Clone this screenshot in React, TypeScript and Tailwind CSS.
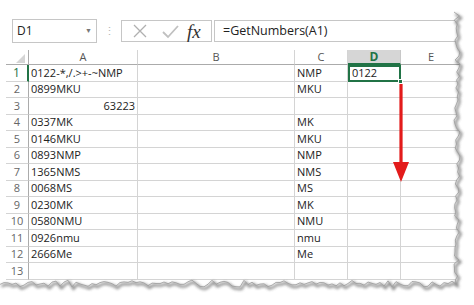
import React from "react";

const rows: [string, string, boolean?][] = [
  ["0122-*,/.>+-~NMP", "NMP"],
  ["0899MKU", "MKU"],
  ["63223", "", true],
  ["0337MK", "MK"],
  ["0146MKU", "MKU"],
  ["0893NMP", "NMP"],
  ["1365NMS", "NMS"],
  ["0068MS", "MS"],
  ["0230MK", "MK"],
  ["0580NMU", "NMU"],
  ["0926nmu", "nmu"],
  ["2666Me", "Me"],
  ["", ""],
];

// pseudo random for torn paper edge
const rnd = (i: number) => {
  const v = Math.sin(i * 12.9898) * 43758.5453;
  return v - Math.floor(v);
};

function TornEdge() {
  const edge: string[] = [];
  for (let y = 12, i = 0; y <= 282; y += 4, i++) {
    edge.push(`${(454 + rnd(i) * 6).toFixed(1)},${y}`);
  }
  for (let x = 456, i = 0; x >= 0; x -= 4, i++) {
    edge.push(`${x},${(280 + rnd(i + 200) * 7).toFixed(1)}`);
  }
  const paper = `M0,12 L455,12 L${edge.join(" L")} L0,283 Z`;
  return (
    <svg className="absolute inset-0 pointer-events-none" width={474} height={305}>
      <defs>
        <filter id="blur" x="-10%" y="-10%" width="120%" height="120%">
          <feGaussianBlur stdDeviation="1.4" />
        </filter>
      </defs>
      <path d={`M0,0 H474 V305 H0 Z ${paper}`} fill="#fff" fillRule="evenodd" />
      <polyline
        points={edge.join(" ")}
        fill="none"
        stroke="#444"
        strokeWidth={2}
        opacity={0.75}
        filter="url(#blur)"
        transform="translate(1.5,2)"
      />
      <polyline points={edge.join(" ")} fill="none" stroke="#9a9a9a" strokeWidth={0.8} />
    </svg>
  );
}

export default function App() {
  return (
    <div
      className="relative w-[474px] h-[305px] overflow-hidden bg-white text-[#222]"
      style={{ fontFamily: "'Open Sans', sans-serif" }}
    >
      <div className="h-[12px] border-b border-[#e6e6e6] flex items-start">
        <span className="ml-[58px] mt-[3px] w-[1px] h-[4px] bg-[#bbb]" />
        <span className="ml-[5px] mt-[3px] w-[1px] h-[4px] bg-[#bbb]" />
        <span className="ml-[180px] mt-[3px] w-[1px] h-[4px] bg-[#bbb]" />
      </div>

      {/* formula bar */}
      <div className="flex items-center h-[24px] mt-[7px] pl-[12px]">
        <div className="w-[85px] h-[24px] border border-[#c6c6c6] flex items-center justify-between px-[4px] text-[12px]">
          <span>D1</span>
          <span className="text-[7px] text-[#777]">▼</span>
        </div>
        <div className="w-[24px] flex justify-center text-[#b5b5b5] text-[11px]">⋮</div>
        <div className="w-[91px] h-[22px] border border-[#c6c6c6] flex items-center">
          <svg width={30} height={20} viewBox="0 0 30 20" className="ml-[3px]">
            <path d="M9 4 L21 16 M21 4 L9 16" stroke="#b0b0b0" strokeWidth={1.3} fill="none" />
          </svg>
          <svg width={30} height={20} viewBox="0 0 30 20">
            <path d="M8 11 L13 16 L23 5" stroke="#c0c0c0" strokeWidth={1.8} fill="none" />
          </svg>
          <span
            className="ml-[2px] italic text-[19px] leading-none text-[#333]"
            style={{ fontFamily: "'Liberation Serif', serif" }}
          >
            fx
          </span>
        </div>
        <div className="ml-[2px] flex-1 h-[22px] border border-[#c6c6c6] flex items-center pl-[8px] text-[12.5px]">
          =GetNumbers(A1)
        </div>
      </div>

      {/* sheet */}
      <div className="mt-[7px] ml-[6px] w-[456px] grid grid-cols-[23px_109px_157px_53px_53px_1fr] text-[11px]">
        <div className="h-[15px] border-b border-r border-[#ababab] flex items-end justify-end pr-[3px] pb-[1px]">
          <svg width={9} height={9} viewBox="0 0 9 9">
            <path d="M9 0 L9 9 L0 9 Z" fill="#d5d5d5" />
          </svg>
        </div>
        {["A", "B", "C", "D", "E"].map((c) => (
          <div
            key={c}
            className={
              c === "D"
                ? "h-[15px] bg-[#d6d6d6] border-b-2 border-b-[#217346] border-r border-r-[#c8c8c8] flex items-center justify-center text-[12px] font-bold text-[#217346]"
                : "h-[15px] border-b border-[#ababab] border-r border-r-[#d4d4d4] flex items-center justify-center text-[11px] text-[#555]"
            }
          >
            {c}
          </div>
        ))}

        {rows.map(([a, c, right], i) => (
          <React.Fragment key={i}>
            <div
              className={
                i === 0
                  ? "h-[16.5px] border-r-2 border-r-[#217346] border-b border-b-[#d4d4d4] flex items-center justify-center text-[12px] text-[#217346]"
                  : "h-[16.5px] border-r border-r-[#ababab] border-b border-b-[#d4d4d4] flex items-center justify-center text-[11px] text-[#666]"
              }
            >
              {i + 1}
            </div>
            <div
              className={`h-[16.5px] border-r border-b border-[#d4d4d4] flex items-center px-[2px] whitespace-nowrap ${right ? "justify-end" : ""}`}
            >
              {a}
            </div>
            <div className="h-[16.5px] border-r border-b border-[#d4d4d4]" />
            <div className="h-[16.5px] border-r border-b border-[#d4d4d4] flex items-center px-[2px]">{c}</div>
            <div
              className={
                i === 0
                  ? "relative h-[16.5px] border-2 border-[#217346] flex items-center px-[2px]"
                  : "h-[16.5px] border-r border-b border-[#d4d4d4]"
              }
            >
              {i === 0 && (
                <>
                  0122
                  <span className="absolute right-[-4px] bottom-[-4px] w-[5px] h-[5px] bg-[#217346] border border-white" />
                </>
              )}
            </div>
            <div className="h-[16.5px] border-b border-[#d4d4d4]" />
          </React.Fragment>
        ))}
      </div>

      {/* red drag arrow */}
      <svg className="absolute left-[390px] top-[82px]" width={22} height={104} viewBox="0 0 22 104">
        <line x1={11} y1={2} x2={11} y2={84} stroke="#e31b1b" strokeWidth={3.2} />
        <path d="M3 80 L19 80 L11 100 Z" fill="#e31b1b" />
      </svg>

      <TornEdge />
    </div>
  );
}
